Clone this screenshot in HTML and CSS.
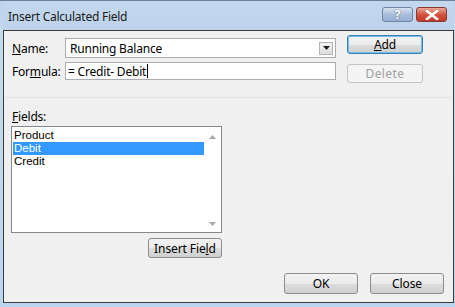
FILE: index.html
```html
<!DOCTYPE html>
<html>
<head>
<meta charset="utf-8">
<link rel="stylesheet" href="styles.css">
</head>
<body>
<div class="window">
  <div class="titlebar">
    <span class="title">Insert Calculated Field</span>
    <div class="caption-btns">
      <span class="cbtn help">?</span>
      <span class="cbtn close">
        <svg width="14" height="10" viewBox="0 0 14 10"><path d="M2 1 L12 9 M12 1 L2 9" stroke="#fff" stroke-width="2.6" stroke-linecap="square"/></svg>
      </span>
    </div>
  </div>
  <div class="client">
    <div class="top">
      <div class="fields-col">
        <div class="row row-name">
          <label class="lbl"><u>N</u>ame:</label>
          <div class="combo">
            <span class="val">Running Balance</span>
            <span class="drop"><svg width="7" height="4" viewBox="0 0 7 4"><path d="M0 0 H7 L3.5 4 Z" fill="#222"/></svg></span>
          </div>
        </div>
        <div class="row row-formula">
          <label class="lbl">For<u>m</u>ula:</label>
          <div class="edit"><span class="val">= Credit- Debit</span><span class="caret"></span></div>
        </div>
      </div>
      <div class="btn-col">
        <button class="btn focus"><u>A</u>dd</button>
        <button class="btn disabled">Delete</button>
      </div>
    </div>
    <div class="sep"></div>
    <div class="lbl fields-lbl"><u>F</u>ields:</div>
    <div class="listbox">
      <ul class="items">
        <li>Product</li>
        <li class="sel">Debit</li>
        <li>Credit</li>
      </ul>
      <div class="scroll">
        <svg width="7" height="4" viewBox="0 0 7 4"><path d="M0 4 L3.5 0 L7 4 Z" fill="#a8a8a8"/></svg>
        <svg width="7" height="4" viewBox="0 0 7 4"><path d="M0 0 H7 L3.5 4 Z" fill="#a8a8a8"/></svg>
      </div>
    </div>
    <div class="insert-row">
      <button class="btn insert">Insert Fie<u>l</u>d</button>
    </div>
    <div class="bottom">
      <button class="btn">OK</button>
      <button class="btn">Close</button>
    </div>
  </div>
</div>
</body>
</html>
```

FILE: styles.css
```css
* { box-sizing: border-box; }
html, body { margin: 0; padding: 0; }
body {
  width: 455px; height: 307px; overflow: hidden;
  font-family: "Noto Sans", "Open Sans", sans-serif;
  font-size: 12px; color: #000;
}
.window {
  width: 455px; height: 307px;
  background: linear-gradient(#bfd4ec, #c4d9ef 30px, #bcd5ee);
  border-top: 1px solid #6b7f95;
  display: flex; flex-direction: column;
  padding: 0 1px 4px 3px;
}
.titlebar {
  height: 29px; display: flex; align-items: flex-start;
  justify-content: space-between;
  background: linear-gradient(#c3d7ee, #bed3eb);
}
.title {
  margin: 7px 0 0 5px; font-size: 12px; letter-spacing: -0.25px; color: #1a1a1a;
}
.caption-btns { display: flex; gap: 3px; margin: 6px 7px 0 0; }
.cbtn {
  height: 15px; display: flex; align-items: center; justify-content: center;
  border: 1px solid #6e86a6; border-radius: 3px;
}
.help {
  width: 31px; color: #fff; font-weight: bold; font-size: 13px; line-height: 13px;
  background: linear-gradient(#d7e3f1, #a9bedb 50%, #97afd1);
  text-shadow: 0 0 1px #52667f, 0 0 1px #52667f;
}
.close {
  width: 31px; border-color: #8a3a30;
  background: linear-gradient(#e9a79a, #d2533e 50%, #c13c28);
}
.client {
  flex: 1; background: #f0f0f0;
  border: 1px solid #3b3b3b;
  display: flex; flex-direction: column;
  padding: 4px 29px 0 7px;
}
.top { display: flex; gap: 11px; }
.fields-col { display: flex; flex-direction: column; gap: 4px; padding-top: 3px; width: 325px; }
.row { display: flex; align-items: center; }
.lbl { width: 54px; padding-left: 1px; letter-spacing: -0.2px; }
.combo, .edit {
  width: 271px; background: #fff; border: 1px solid #ababab;
  display: flex; align-items: center; padding-left: 4px;
  letter-spacing: -0.2px;
}
.combo { height: 20px; justify-content: space-between; padding-right: 2px; }
.edit { height: 18px; border-color: #abadb3; padding-left: 2px; }
.drop {
  width: 14px; height: 13px; border: 1px solid #b3b3b3;
  background: linear-gradient(#f4f4f4, #dcdcdc);
  display: flex; align-items: center; justify-content: center;
}
.caret { width: 1px; height: 14px; background: #000; margin-left: 1px; }
.btn-col { display: flex; flex-direction: column; gap: 10px; }
.btn {
  font-family: inherit; font-size: 12px; color: #000;
  height: 20px; width: 76px; padding: 0;
  border: 1px solid #8d8d8d; border-radius: 3px;
  background: linear-gradient(#f2f2f2, #ebebeb 50%, #dddddd 51%, #cfcfcf);
  letter-spacing: -0.1px;
}
.btn-col .btn { height: 19px; line-height: 15px; }
.btn.focus { border-color: #3c7fb1; box-shadow: inset 0 0 0 1px #6cc0e9; }
.btn.disabled { color: #a0a0a0; border-color: #c4c4c4; background: #f4f4f4; letter-spacing: 0.4px; }
.sep { height: 1px; background: #e2e2e2; margin: 14px 0 0 -7px; width: 448px; }
.fields-lbl { margin-top: 10px; height: 16px; width: auto; }
.listbox {
  margin: 2px 0 0 0; width: 211px; height: 107px;
  background: #fff; border: 1px solid #828790;
  display: flex;
}
.items { list-style: none; margin: 0; padding: 2px 0 0 1px; flex: 1; }
.items li {
  height: 13px; line-height: 13px; padding-left: 1px;
  font-family: "Liberation Sans", Arial, sans-serif; font-size: 11.5px;
}
.items li.sel { background: #3399ff; color: #fff; }
.scroll {
  width: 17px; display: flex; flex-direction: column; justify-content: space-between;
  align-items: center; padding: 8px 0 6px;
}
.insert-row { display: flex; margin-top: 5px; padding-left: 137px; }
.btn.insert { width: 74px; height: 20px; }
.bottom { display: flex; justify-content: flex-end; gap: 12px; margin-top: 15px; margin-right: -20px; }
.bottom .btn { width: 74px; height: 21px; }
```
